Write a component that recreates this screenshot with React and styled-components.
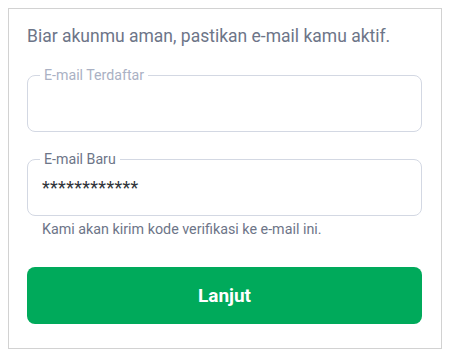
import styled, { createGlobalStyle } from "styled-components"

const Global = createGlobalStyle`
body {
  margin: 8px;
  background: #ffffff;
  font-family: Roboto, "Liberation Sans", sans-serif;
}
`

const Card = styled.div`
  width: 434px;
  box-sizing: border-box;
  padding: 14px 19px 24px 18px;
  background: #fff;
  border: 1px solid #d2d2d2;
  box-shadow: 1px 1px 3px rgba(0, 0, 0, 0.3);
`

const Intro = styled.p`
  margin: 0;
  font-size: 17.5px;
  line-height: 26px;
  color: #6d7588;
`

const Field = styled.fieldset`
  margin: ${(p) => p.$top}px 0 0;
  padding: 0 14px;
  height: 66px;
  box-sizing: border-box;
  border: 1px solid #d3d8e3;
  border-radius: 8px;
  display: flex;
  align-items: center;
`

const Legend = styled.legend`
  padding: 0 4px;
  margin-left: -2px;
  font-size: 14.2px;
  line-height: 18px;
  color: ${(p) => (p.$muted ? "#aab1c4" : "#6d7588")};
`

const Value = styled.div`
  margin-top: -9px;
  font-size: 18px;
  color: #31353b;
  letter-spacing: 0.3px;
`

const Helper = styled.p`
  margin: 3px 0 0 15px;
  font-size: 14.3px;
  line-height: 20px;
  color: #6d7588;
`

const Button = styled.button`
  margin-top: 28px;
  width: 100%;
  height: 57px;
  border: none;
  border-radius: 8px;
  background: #00aa5b;
  color: #fff;
  font-family: Roboto, "Liberation Sans", sans-serif;
  font-size: 19px;
  font-weight: 700;
  cursor: pointer;
`

export default function App() {
  return (
    <>
      <Global />
      <Card>
        <Intro>Biar akunmu aman, pastikan e-mail kamu aktif.</Intro>
        <Field $top={17}>
          <Legend $muted>E-mail Terdaftar</Legend>
        </Field>
        <Field $top={18}>
          <Legend>E-mail Baru</Legend>
          <Value>************</Value>
        </Field>
        <Helper>Kami akan kirim kode verifikasi ke e-mail ini.</Helper>
        <Button>Lanjut</Button>
      </Card>
    </>
  )
}
